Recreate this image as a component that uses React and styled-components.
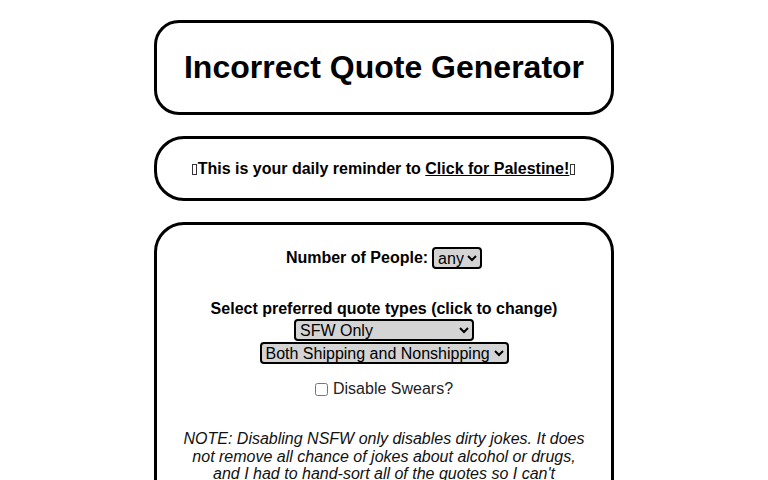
import React, { useState } from "react";
import styled, { createGlobalStyle } from "styled-components";

const GlobalStyle = createGlobalStyle`
  body {
    margin: 0;
    background: #ffffff;
    font-family: "Liberation Sans", Arial, sans-serif;
    color: #000;
  }
  * {
    box-sizing: border-box;
  }
`;

const Page = styled.div`
  display: flex;
  flex-direction: column;
  align-items: center;
  gap: 21px;
  padding-top: 20px;
`;

const Card = styled.div`
  width: 460px;
  border: 3px solid #000;
  border-radius: ${(props) => props.radius || 25}px;
  padding: ${(props) => props.pad || "0 25px"};
  text-align: center;
  background: #fff;
`;

const Title = styled.h1`
  margin: 0;
  font-size: 32px;
  font-weight: bold;
  line-height: 37px;
`;

const Reminder = styled.p`
  margin: 0;
  font-size: 16px;
  font-weight: bold;
  line-height: 19px;
  white-space: nowrap;

  a {
    color: #000;
    text-decoration: underline;
  }
`;

// missing-glyph box, as the page shows it
const Tofu = styled.span`
  display: inline-block;
  width: 5px;
  height: 11px;
  border: 1px solid #333;
  margin: 0 1px 0 ${(props) => (props.after ? 1 : 0)}px;
  vertical-align: -1px;
`;

const Row = styled.div`
  display: flex;
  justify-content: center;
  align-items: center;
  gap: ${(props) => props.gap || 4}px;
  margin-top: ${(props) => props.top || 0}px;
  font-size: 16px;
  font-weight: ${(props) => (props.bold ? "bold" : "normal")};
  line-height: 18px;
`;

const Select = styled.select`
  width: ${(props) => (props.w ? `${props.w}px` : "auto")};
  height: 22px;
  font-family: "Liberation Sans", Arial, sans-serif;
  font-size: 16px;
  color: #000;
  background: #d4d4d4;
  border: 2px solid #000;
  border-radius: 4px;
  padding: 0;
`;

const Check = styled.input`
  width: 13px;
  height: 13px;
  margin: 0;
`;

const CheckLabel = styled.label`
  display: flex;
  align-items: center;
  gap: 5px;
  color: #222;
`;

const Note = styled.p`
  margin: 32px 0 0;
  font-size: 16px;
  font-style: italic;
  line-height: 17.5px;
  color: #111;
`;

const App = () => {
  const [people, setPeople] = useState("any");
  const [rating, setRating] = useState("sfw");
  const [ship, setShip] = useState("both");
  const [noSwears, setNoSwears] = useState(false);

  return (
    <>
      <GlobalStyle />
      <Page>
        <Card pad="26px 25px">
          <Title>Incorrect Quote Generator</Title>
        </Card>
        <Card pad="20px 10px" radius={30}>
          <Reminder>
            <Tofu />This is your daily reminder to{" "}
            <a href="#">Click for Palestine!</a>
            <Tofu after />
          </Reminder>
        </Card>
        <Card pad="22px 25px 40px" radius={30}>
          <Row bold>
            <span>Number of People:</span>
            <Select value={people} onChange={(e) => setPeople(e.target.value)}>
              <option value="any">any</option>
              <option value="1">1</option>
              <option value="2">2</option>
              <option value="3">3</option>
              <option value="4">4</option>
              <option value="5">5</option>
              <option value="6">6</option>
            </Select>
          </Row>
          <Row bold top={31}>
            Select preferred quote types (click to change)
          </Row>
          <Row top={1}>
            <Select w={180} value={rating} onChange={(e) => setRating(e.target.value)}>
              <option value="sfw">SFW Only</option>
              <option value="nsfw">NSFW Only</option>
              <option value="all">SFW and NSFW</option>
            </Select>
          </Row>
          <Row top={1}>
            <Select w={249} value={ship} onChange={(e) => setShip(e.target.value)}>
              <option value="both">Both Shipping and Nonshipping</option>
              <option value="ship">Shipping Only</option>
              <option value="nonship">Nonshipping Only</option>
            </Select>
          </Row>
          <Row top={16}>
            <CheckLabel>
              <Check
                type="checkbox"
                checked={noSwears}
                onChange={(e) => setNoSwears(e.target.checked)}
              />
              Disable Swears?
            </CheckLabel>
          </Row>
          <Note>
            NOTE: Disabling NSFW only disables dirty jokes. It does not remove
            all chance of jokes about alcohol or drugs, and I had to hand-sort
            all of the quotes so I can't guarantee that I caught everything.
          </Note>
        </Card>
      </Page>
    </>
  );
};

export default App;
